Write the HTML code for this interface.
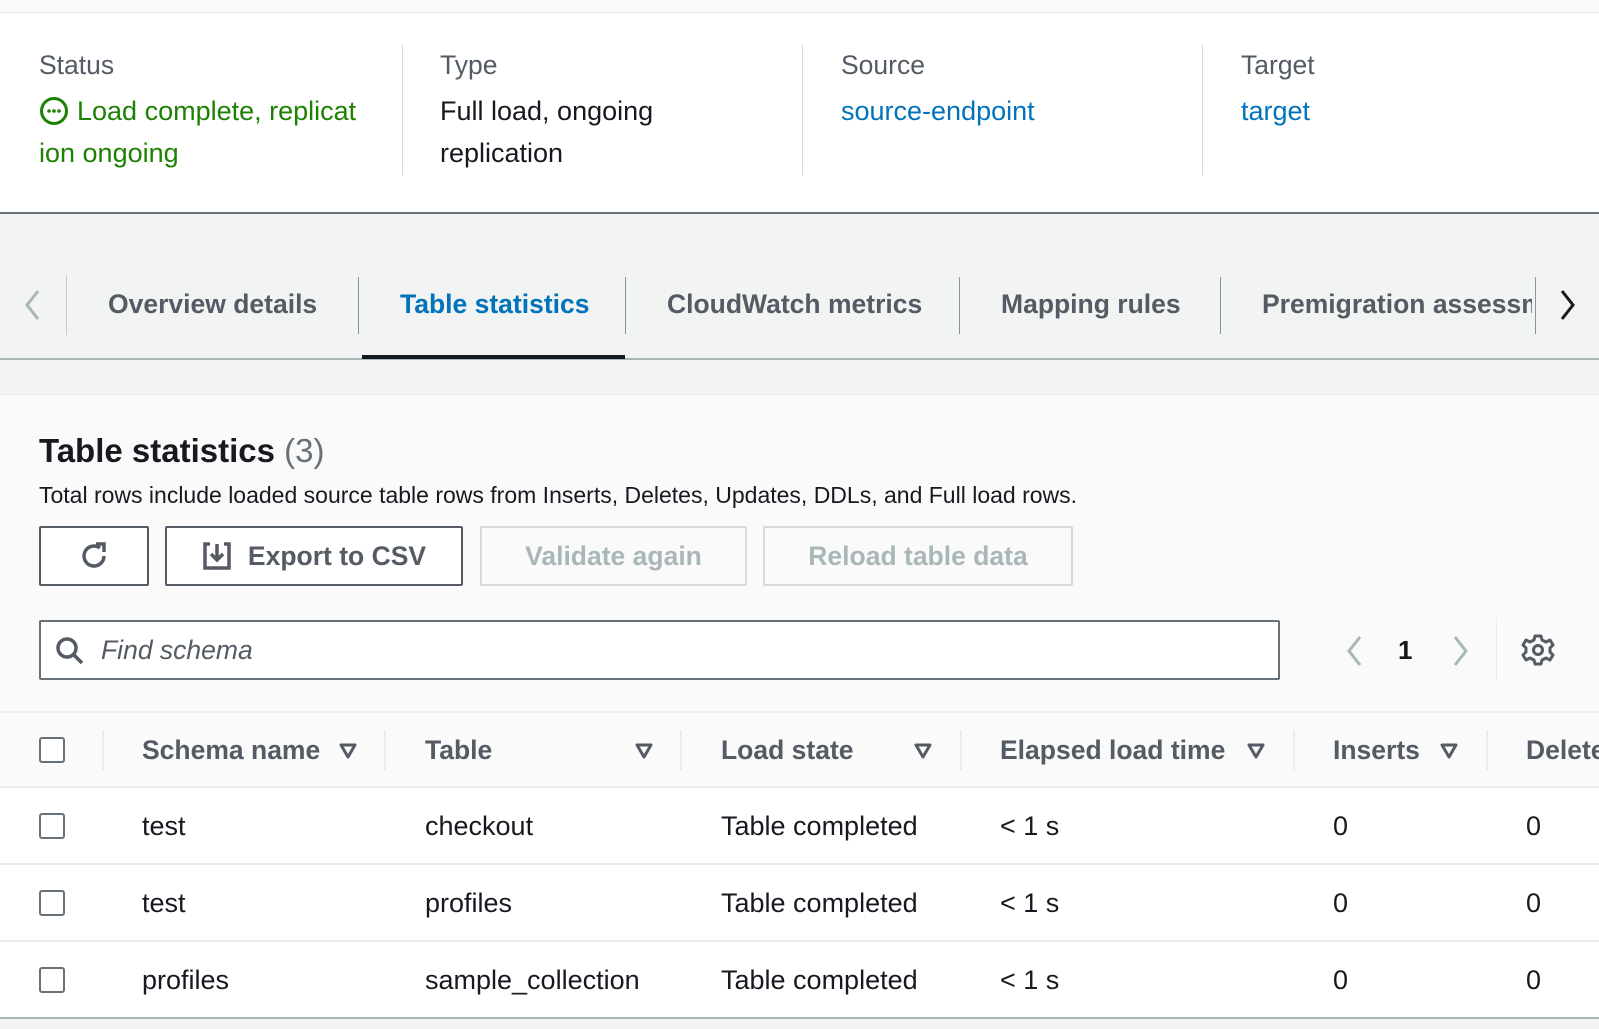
<!DOCTYPE html>
<html><head><meta charset="utf-8"><style>
*{margin:0;padding:0;box-sizing:border-box}
body{width:1599px;height:1029px;overflow:hidden;background:#f2f3f3;font-family:"Liberation Sans",sans-serif;color:#16191f;position:relative}
.a{position:absolute;white-space:nowrap}
.lab{font-size:26.5px;color:#545b64}
.val{font-size:27px;line-height:42px}
.vd{position:absolute;width:1px;background:#d5dbdb}
.tab{position:absolute;top:289px;font-size:26.5px;font-weight:bold;color:#545b64;white-space:nowrap}
.btn{position:absolute;top:526px;height:60px;border:2px solid #545b64;border-radius:2px;background:#fff;font-size:26.5px;font-weight:bold;color:#545b64;display:flex;align-items:center;justify-content:center;white-space:nowrap}
.dis{border:2px solid #d5dbdb;color:#aab7b8;background:#fafafa}
.th{position:absolute;top:735px;font-size:26.5px;font-weight:bold;color:#545b64;white-space:nowrap}
.td{position:absolute;font-size:27px;white-space:nowrap}
.cb{position:absolute;left:39px;width:26px;height:26px;border:2px solid #687078;border-radius:3px;background:#fff}
.sep{position:absolute;width:2px;background:#eaeded}
.tri{position:absolute;top:742px}
</style></head><body>
<div class="a" style="left:0;top:0;width:1599px;height:13px;background:#fafafa;border-bottom:1px solid #e4e7e7"></div>
<div class="a" style="left:0;top:13px;width:1599px;height:201px;background:#fff;border-bottom:2px solid #687078"></div>
<div class="a lab" style="left:39px;top:50px">Status</div>
<div class="a val" style="left:39px;top:90px;color:#1d8102"><svg width="30" height="30" viewBox="0 0 30 30" style="vertical-align:-6px;margin-right:8px"><circle cx="15" cy="15" r="12.5" fill="none" stroke="#1d8102" stroke-width="3"/><circle cx="10" cy="15" r="1.8" fill="#1d8102"/><circle cx="15" cy="15" r="1.8" fill="#1d8102"/><circle cx="20" cy="15" r="1.8" fill="#1d8102"/></svg>Load complete, replicat<br>ion ongoing</div>
<div class="vd" style="left:402px;top:45px;height:130px"></div>
<div class="a lab" style="left:440px;top:50px">Type</div>
<div class="a val" style="left:440px;top:90px">Full load, ongoing<br>replication</div>
<div class="vd" style="left:802px;top:45px;height:130px"></div>
<div class="a lab" style="left:841px;top:50px">Source</div>
<div class="a val" style="left:841px;top:90px;color:#0073bb">source-endpoint</div>
<div class="vd" style="left:1202px;top:45px;height:130px"></div>
<div class="a lab" style="left:1241px;top:50px">Target</div>
<div class="a val" style="left:1241px;top:90px;color:#0073bb">target</div>

<svg class="a" style="left:22px;top:288px" width="20" height="34" viewBox="0 0 20 34"><path d="M16 3 L5 17 L16 31" fill="none" stroke="#aab7b8" stroke-width="3"/></svg>
<div class="vd" style="left:66px;top:275px;height:60px;background:#c6cbcb"></div>
<div class="tab" style="left:108px">Overview details</div>
<div class="vd" style="left:358px;top:277px;height:57px;background:#879596"></div>
<div class="tab" style="left:400px;color:#0073bb">Table statistics</div>
<div class="vd" style="left:625px;top:277px;height:57px;background:#879596"></div>
<div class="tab" style="left:667px">CloudWatch metrics</div>
<div class="vd" style="left:959px;top:277px;height:57px;background:#879596"></div>
<div class="tab" style="left:1001px">Mapping rules</div>
<div class="vd" style="left:1220px;top:277px;height:57px;background:#879596"></div>
<div class="tab" style="left:1262px;width:270px;overflow:hidden">Premigration assessment</div>
<div class="vd" style="left:1535px;top:277px;height:57px;background:#879596"></div>
<svg class="a" style="left:1558px;top:288px" width="20" height="34" viewBox="0 0 20 34"><path d="M4 3 L15 17 L4 31" fill="none" stroke="#16191f" stroke-width="3"/></svg>
<div class="a" style="left:0;top:358px;width:1599px;height:2px;background:#aab7b8"></div>
<div class="a" style="left:362px;top:355px;width:263px;height:4px;background:#16191f"></div>

<div class="a" style="left:0;top:394px;width:1599px;height:625px;background:#fafafa;border-top:1px solid #eaeded"></div>
<div class="a" style="left:39px;top:432px;font-size:33px;font-weight:bold">Table statistics <span style="font-weight:normal;color:#687078">(3)</span></div>
<div class="a" style="left:39px;top:482px;font-size:23px;color:#16191f">Total rows include loaded source table rows from Inserts, Deletes, Updates, DDLs, and Full load rows.</div>

<div class="btn" style="left:39px;width:110px"><svg width="34" height="34" viewBox="0 0 34 34"><path d="M27 17 A10 10 0 1 1 23 9" fill="none" stroke="#545b64" stroke-width="3.5"/><path d="M19 5 L27 5 L27 13" fill="none" stroke="#545b64" stroke-width="3.5"/></svg></div>
<div class="btn" style="left:165px;width:298px"><svg width="30" height="30" viewBox="0 0 30 30" style="margin-right:16px"><path d="M8 3 L3 3 L3 27 L27 27 L27 3 L22 3" fill="none" stroke="#545b64" stroke-width="3.5"/><path d="M15 3 L15 19 M9 13 L15 19 L21 13" fill="none" stroke="#545b64" stroke-width="3.5"/></svg>Export to CSV</div>
<div class="btn dis" style="left:480px;width:267px">Validate again</div>
<div class="btn dis" style="left:763px;width:310px">Reload table data</div>

<div class="a" style="left:39px;top:620px;width:1241px;height:60px;background:#fff;border:2px solid #687078;border-radius:2px"></div>
<svg class="a" style="left:54px;top:635px" width="32" height="32" viewBox="0 0 32 32"><circle cx="13" cy="13" r="9" fill="none" stroke="#545b64" stroke-width="3.5"/><path d="M20 20 L28 28" stroke="#545b64" stroke-width="3.5"/></svg>
<div class="a" style="left:101px;top:635px;font-size:26.5px;font-style:italic;color:#545b64">Find schema</div>
<svg class="a" style="left:1343px;top:634px" width="22" height="34" viewBox="0 0 22 34"><path d="M17 3 L6 17 L17 31" fill="none" stroke="#aab7b8" stroke-width="3"/></svg>
<div class="a" style="left:1398px;top:635px;font-size:26px;font-weight:bold">1</div>
<svg class="a" style="left:1450px;top:634px" width="22" height="34" viewBox="0 0 22 34"><path d="M5 3 L16 17 L5 31" fill="none" stroke="#aab7b8" stroke-width="3"/></svg>
<div class="vd" style="left:1496px;top:618px;height:62px;background:#eaeded"></div>
<svg class="a" style="left:1521px;top:633px" width="34" height="34" viewBox="0 0 34 34"><path d="M14 3 h6 l1 4 l4 2 l4 -2 l3 5 l-3 3 v4 l3 3 l-3 5 l-4 -2 l-4 2 l-1 4 h-6 l-1 -4 l-4 -2 l-4 2 l-3 -5 l3 -3 v-4 l-3 -3 l3 -5 l4 2 l4 -2 z" fill="none" stroke="#545b64" stroke-width="3" stroke-linejoin="round"/><circle cx="17" cy="17" r="4.5" fill="none" stroke="#545b64" stroke-width="3"/></svg>

<div class="a" style="left:0;top:711px;width:1599px;height:2px;background:#eaeded"></div>
<div class="cb" style="top:737px"></div>
<div class="sep" style="left:102px;top:730px;height:40px"></div>
<div class="th" style="left:142px">Schema name</div>
<svg class="a tri" style="left:338px" width="20" height="18" viewBox="0 0 20 18"><path d="M3 3 L17 3 L10 15 Z" fill="none" stroke="#545b64" stroke-width="3" stroke-linejoin="round"/></svg>
<div class="sep" style="left:384px;top:730px;height:40px"></div>
<div class="th" style="left:425px">Table</div>
<svg class="a tri" style="left:634px" width="20" height="18" viewBox="0 0 20 18"><path d="M3 3 L17 3 L10 15 Z" fill="none" stroke="#545b64" stroke-width="3" stroke-linejoin="round"/></svg>
<div class="sep" style="left:680px;top:730px;height:40px"></div>
<div class="th" style="left:721px">Load state</div>
<svg class="a tri" style="left:913px" width="20" height="18" viewBox="0 0 20 18"><path d="M3 3 L17 3 L10 15 Z" fill="none" stroke="#545b64" stroke-width="3" stroke-linejoin="round"/></svg>
<div class="sep" style="left:960px;top:730px;height:40px"></div>
<div class="th" style="left:1000px">Elapsed load time</div>
<svg class="a tri" style="left:1246px" width="20" height="18" viewBox="0 0 20 18"><path d="M3 3 L17 3 L10 15 Z" fill="none" stroke="#545b64" stroke-width="3" stroke-linejoin="round"/></svg>
<div class="sep" style="left:1293px;top:730px;height:40px"></div>
<div class="th" style="left:1333px">Inserts</div>
<svg class="a tri" style="left:1439px" width="20" height="18" viewBox="0 0 20 18"><path d="M3 3 L17 3 L10 15 Z" fill="none" stroke="#545b64" stroke-width="3" stroke-linejoin="round"/></svg>
<div class="sep" style="left:1486px;top:730px;height:40px"></div>
<div class="th" style="left:1526px">Deletes</div>

<div class="a" style="left:0;top:786px;width:1599px;height:233px;background:#fff"></div>
<div class="a" style="left:0;top:786px;width:1599px;height:2px;background:#eaeded"></div>
<div class="a" style="left:0;top:863px;width:1599px;height:2px;background:#eaeded"></div>
<div class="a" style="left:0;top:940px;width:1599px;height:2px;background:#eaeded"></div>
<div class="a" style="left:0;top:1017px;width:1599px;height:2px;background:#aab7b8"></div>

<div class="cb" style="top:813px"></div>
<div class="td" style="left:142px;top:811px">test</div><div class="td" style="left:425px;top:811px">checkout</div><div class="td" style="left:721px;top:811px">Table completed</div><div class="td" style="left:1000px;top:811px">&lt; 1 s</div><div class="td" style="left:1333px;top:811px">0</div><div class="td" style="left:1526px;top:811px">0</div>
<div class="cb" style="top:890px"></div>
<div class="td" style="left:142px;top:888px">test</div><div class="td" style="left:425px;top:888px">profiles</div><div class="td" style="left:721px;top:888px">Table completed</div><div class="td" style="left:1000px;top:888px">&lt; 1 s</div><div class="td" style="left:1333px;top:888px">0</div><div class="td" style="left:1526px;top:888px">0</div>
<div class="cb" style="top:967px"></div>
<div class="td" style="left:142px;top:965px">profiles</div><div class="td" style="left:425px;top:965px">sample_collection</div><div class="td" style="left:721px;top:965px">Table completed</div><div class="td" style="left:1000px;top:965px">&lt; 1 s</div><div class="td" style="left:1333px;top:965px">0</div><div class="td" style="left:1526px;top:965px">0</div>
</body></html>
